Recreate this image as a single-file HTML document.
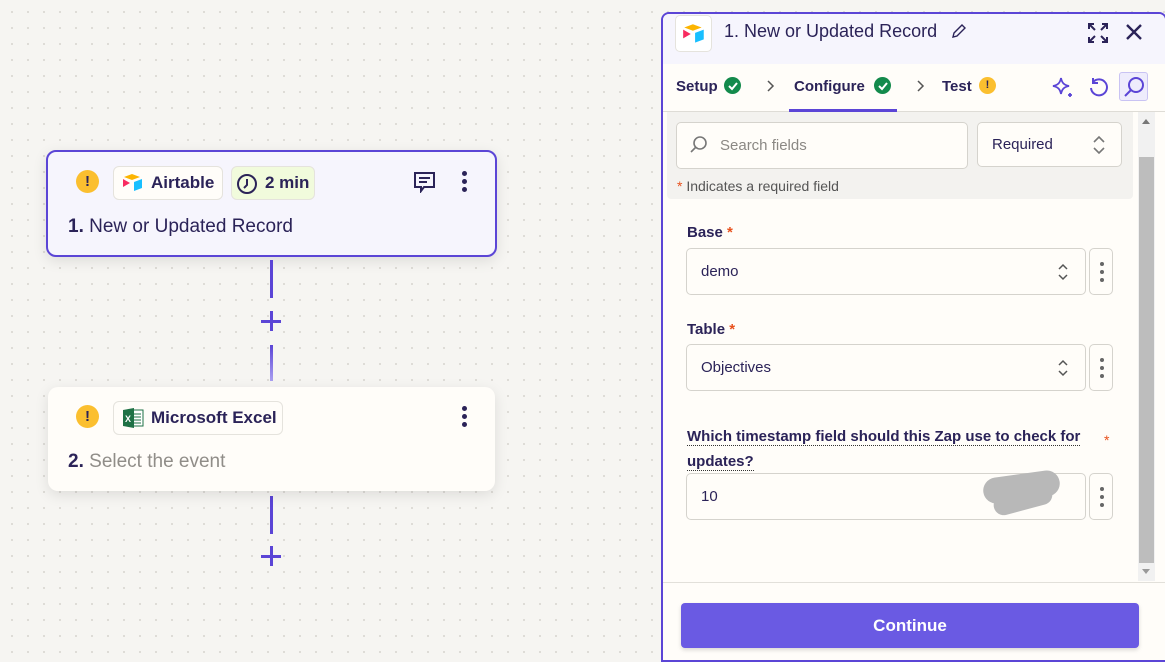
<!DOCTYPE html>
<html><head><style>
*{box-sizing:border-box;margin:0;padding:0}
body{width:1165px;height:657px;overflow:hidden;position:relative;font-family:"Liberation Sans",sans-serif;color:#2b2358;
background-color:#f6f5f2;background-image:radial-gradient(#dcdad5 1px,transparent 1.2px);background-size:16px 16px;background-position:4px 4px}
.abs{position:absolute}
.card{position:absolute;border-radius:10px;background:#fffdf9;box-shadow:0 4px 14px rgba(0,0,0,.10)}
.warn{position:absolute;width:23px;height:23px;border-radius:50%;background:#fbbf2f;color:#2b2358;font-weight:bold;font-size:15px;text-align:center;line-height:23px}
.chip{position:absolute;height:34px;border:1px solid #e5e3dd;border-radius:6px;background:#fffdf9;font-size:17px;font-weight:bold;line-height:32px;color:#2b2358}
.dots{position:absolute;width:6px}
.dots i{display:block;width:5px;height:5px;border-radius:50%;background:#2b2358;margin-bottom:3px}
.lbl{position:absolute;font-size:15px;font-weight:bold;color:#2b2358}
.inp{position:absolute;height:47px;border:1px solid #d5d3cd;border-radius:5px;background:#fffdf9;font-size:15px;line-height:45px;padding-left:14px;color:#2b2358}
.kb{position:absolute;width:24px;height:47px;border:1px solid #d5d3cd;border-radius:5px;background:#fffdf9}
.kb i{position:absolute;left:10px;width:4px;height:4px;border-radius:50%;background:#666}
.star{color:#e8501c}
.chev{position:absolute;top:0}
</style></head><body>

<!-- card 1 -->
<div class="card" style="left:46px;top:150px;width:451px;height:107px;border:2px solid #5b45d6;background:#f6f5fd"></div>
<div class="warn" style="left:76px;top:170px">!</div>
<div class="chip" style="left:113px;top:166px;width:110px;padding-left:37px">Airtable</div>
<svg class="abs" style="left:121px;top:173px" width="24" height="20" viewBox="0 0 24 20"><path d="M11 1L3 4l8 3 8-3z" fill="#fcb400"/><path d="M13 9v9l8-3V6z" fill="#18bfff"/><path d="M2 6v8l7-4z" fill="#f82b60"/></svg>
<div class="chip" style="left:231px;top:166px;width:84px;background:#f1fbdc;padding-left:33px">2 min</div>
<svg class="abs" style="left:236px;top:173px" width="22" height="22" viewBox="0 0 22 22"><circle cx="11" cy="11" r="9" fill="none" stroke="#2b2358" stroke-width="2"/><path d="M11 6v6l-3 3" fill="none" stroke="#2b2358" stroke-width="2"/></svg>
<svg class="abs" style="left:413px;top:171px" width="23" height="22" viewBox="0 0 23 22"><path d="M2 2h19v14H11l-3 4v-4H2z" fill="none" stroke="#2b2358" stroke-width="2"/><path d="M6 7h11M6 11h8" stroke="#2b2358" stroke-width="2"/></svg>
<div class="dots" style="left:462px;top:171px"><i></i><i></i><i></i></div>
<div class="abs" style="left:68px;top:216px;font-size:19px;color:#2b2358"><b>1.</b> New or Updated Record</div>

<!-- connectors -->
<div class="abs" style="left:270px;top:260px;width:3px;height:38px;background:#5b45d6"></div>
<div class="abs" style="left:261px;top:320px;width:20px;height:3px;background:#5b45d6"></div>
<div class="abs" style="left:270px;top:311px;width:3px;height:20px;background:#5b45d6"></div>
<div class="abs" style="left:270px;top:345px;width:3px;height:36px;background:linear-gradient(#5b45d6,#a99ff0)"></div>
<div class="abs" style="left:270px;top:496px;width:3px;height:38px;background:#5b45d6"></div>
<div class="abs" style="left:261px;top:555px;width:20px;height:3px;background:#5b45d6"></div>
<div class="abs" style="left:270px;top:546px;width:3px;height:20px;background:#5b45d6"></div>

<!-- card 2 -->
<div class="card" style="left:48px;top:387px;width:447px;height:104px"></div>
<div class="warn" style="left:76px;top:405px">!</div>
<div class="chip" style="left:113px;top:401px;width:170px;padding-left:37px">Microsoft Excel</div>
<svg class="abs" style="left:122px;top:407px" width="22" height="22" viewBox="0 0 22 22"><rect x="8" y="3" width="13" height="16" fill="#fff" stroke="#1e7145"/><path d="M11 7h8M11 10h8M11 13h8M11 16h8" stroke="#1e7145"/><path d="M1 3l11-2v20L1 19z" fill="#1e7145"/><text x="3" y="15" font-size="9" fill="#fff" font-family="Liberation Sans" font-weight="bold">X</text></svg>
<div class="dots" style="left:462px;top:406px"><i></i><i></i><i></i></div>
<div class="abs" style="left:68px;top:451px;font-size:19px;color:#2b2358"><b>2.</b> <span style="color:#908d88">Select the event</span></div>

<!-- panel -->
<div class="abs" style="left:661px;top:12px;width:506px;height:650px;border:2px solid #5b45d6;border-radius:8px 8px 0 0;background:#fffdf9;overflow:hidden">
<div class="abs" style="left:-2px;top:-2px;width:506px;height:650px">
  <div class="abs" style="left:0;top:0;width:506px;height:54px;background:#f6f5fd"></div>
  <div class="abs" style="left:14px;top:3px;width:37px;height:37px;border:1px solid #e5e3dd;border-radius:5px;background:#fff"></div>
  <svg class="abs" style="left:20px;top:10px" width="26" height="24" viewBox="0 0 24 20"><path d="M11 1L3 4l8 3 8-3z" fill="#fcb400"/><path d="M13 9v9l8-3V6z" fill="#18bfff"/><path d="M2 6v8l7-4z" fill="#f82b60"/></svg>
  <div class="abs" style="left:63px;top:9px;font-size:18px;color:#2b2358">1. New or Updated Record</div>
  <svg class="abs" style="left:290px;top:11px" width="16" height="16" viewBox="0 0 16 16"><path d="M2 14l1-4 8-8 3 3-8 8z" fill="none" stroke="#2b2358" stroke-width="1.4"/></svg>
  <svg class="abs" style="left:426px;top:10px" width="22" height="22" viewBox="0 0 22 22" fill="none" stroke="#2b2358" stroke-width="2"><path d="M2 7V2h5M2 2l6 6M20 7V2h-5M20 2l-6 6M2 15v5h5M2 20l6-6M20 15v5h-5M20 20l-6-6"/></svg>
  <svg class="abs" style="left:464px;top:11px" width="18" height="18" viewBox="0 0 18 18" stroke="#2b2358" stroke-width="2.4"><path d="M2 2l14 14M16 2L2 16"/></svg>
  <!-- tabs -->
  <div class="abs" style="left:0;top:52px;width:506px;height:48px;background:#fffdf9;border-bottom:1px solid #dedcd6"></div>
  <div class="abs" style="left:15px;top:66px;font-size:15px;font-weight:bold">Setup</div>
  <div class="abs" style="left:63px;top:65px;width:17px;height:17px;border-radius:50%;background:#138a4c"></div>
  <svg class="abs" style="left:63px;top:65px" width="17" height="17"><path d="M5 9l3 3 5-6" fill="none" stroke="#fff" stroke-width="2"/></svg>
  <svg class="abs" style="left:104px;top:67px" width="10" height="14" viewBox="0 0 10 14" fill="none" stroke="#555" stroke-width="1.5"><path d="M3 2l5 5-5 5"/></svg>
  <div class="abs" style="left:133px;top:66px;font-size:15px;font-weight:bold">Configure</div>
  <div class="abs" style="left:213px;top:65px;width:17px;height:17px;border-radius:50%;background:#138a4c"></div>
  <svg class="abs" style="left:213px;top:65px" width="17" height="17"><path d="M5 9l3 3 5-6" fill="none" stroke="#fff" stroke-width="2"/></svg>
  <div class="abs" style="left:128px;top:97px;width:108px;height:3px;background:#5b45d6"></div>
  <svg class="abs" style="left:254px;top:67px" width="10" height="14" viewBox="0 0 10 14" fill="none" stroke="#555" stroke-width="1.5"><path d="M3 2l5 5-5 5"/></svg>
  <div class="abs" style="left:281px;top:66px;font-size:15px;font-weight:bold">Test</div>
  <div class="warn" style="left:318px;top:65px;width:17px;height:17px;line-height:17px;font-size:11px">!</div>
  <svg class="abs" style="left:391px;top:64px" width="22" height="22" viewBox="0 0 22 22" fill="none" stroke="#5b45d6" stroke-width="1.8"><path d="M9 2c1 5 3 7 8 8-5 1-7 3-8 8-1-5-3-7-8-8 5-1 7-3 8-8z"/><path d="M18 17v4M16 19h4"/></svg>
  <svg class="abs" style="left:427px;top:64px" width="22" height="22" viewBox="0 0 22 22" fill="none" stroke="#5b45d6" stroke-width="2"><path d="M5 6a8 8 0 1 1-2 6"/><path d="M5 2v5h5"/></svg>
  <div class="abs" style="left:458px;top:60px;width:29px;height:29px;border:1px solid #c9c3f3;border-radius:3px;background:#eeecfc"></div>
  <svg class="abs" style="left:462px;top:64px" width="22" height="22" viewBox="0 0 22 22" fill="none" stroke="#5b45d6" stroke-width="2"><circle cx="13" cy="9" r="7"/><path d="M8 14l-6 6"/></svg>
  <!-- filter area -->
  <div class="abs" style="left:6px;top:100px;width:466px;height:87px;background:#f3f2ef;border-radius:0 0 4px 4px"></div>
  <div class="inp" style="left:15px;top:110px;width:292px;height:47px;color:#8b8884;padding-left:43px">Search fields</div>
  <svg class="abs" style="left:28px;top:123px" width="20" height="20" viewBox="0 0 20 20" fill="none" stroke="#777" stroke-width="1.6"><circle cx="11" cy="8" r="6"/><path d="M7 12l-5 5"/></svg>
  <div class="inp" style="left:316px;top:110px;width:145px;height:45px;line-height:43px">Required</div>
  <svg class="abs" style="left:430px;top:122px" width="16" height="22" viewBox="0 0 16 22" fill="none" stroke="#777" stroke-width="1.6"><path d="M3 8l5-5 5 5M3 14l5 5 5-5"/></svg>
  <div class="abs" style="left:16px;top:166px;font-size:14px;color:#555"><span class="star">*</span> Indicates a required field</div>
  <!-- fields -->
  <div class="lbl" style="left:26px;top:212px">Base <span class="star">*</span></div>
  <div class="inp" style="left:25px;top:236px;width:400px">demo</div>
  <svg class="abs" style="left:395px;top:251px" width="14" height="18" viewBox="0 0 14 18" fill="none" stroke="#555" stroke-width="1.5"><path d="M3 6l4-4 4 4M3 12l4 4 4-4"/></svg>
  <div class="kb" style="left:428px;top:236px"><i style="top:13px"></i><i style="top:21px"></i><i style="top:29px"></i></div>
  <div class="lbl" style="left:26px;top:309px">Table <span class="star">*</span></div>
  <div class="inp" style="left:25px;top:332px;width:400px">Objectives</div>
  <svg class="abs" style="left:395px;top:347px" width="14" height="18" viewBox="0 0 14 18" fill="none" stroke="#555" stroke-width="1.5"><path d="M3 6l4-4 4 4M3 12l4 4 4-4"/></svg>
  <div class="kb" style="left:428px;top:332px"><i style="top:13px"></i><i style="top:21px"></i><i style="top:29px"></i></div>
  <div class="lbl" style="left:26px;top:412px;line-height:25px;width:400px"><span style="border-bottom:1px dotted #333">Which timestamp field should this Zap use to check for</span><br><span style="border-bottom:1px dotted #333">updates?</span></div>
  <div class="abs star" style="left:443px;top:420px;font-size:14px">*</div>
  <div class="inp" style="left:25px;top:461px;width:400px">10</div>
  <div class="abs" style="left:322px;top:462px;width:77px;height:26px;background:#b8b8b8;border-radius:14px;transform:rotate(-8deg)"></div>
  <div class="abs" style="left:332px;top:478px;width:60px;height:20px;background:#b8b8b8;border-radius:12px;transform:rotate(-15deg)"></div>
  <div class="kb" style="left:428px;top:461px"><i style="top:13px"></i><i style="top:21px"></i><i style="top:29px"></i></div>
  <!-- scrollbar -->
  <div class="abs" style="left:477px;top:100px;width:17px;height:469px;background:#f1f1f1"></div>
  <div class="abs" style="left:478px;top:145px;width:15px;height:406px;background:#bdbdbd"></div>
  <div class="abs" style="left:481px;top:107px;width:0;height:0;border:4px solid transparent;border-bottom:5px solid #777;border-top:0"></div>
  <div class="abs" style="left:481px;top:557px;width:0;height:0;border:4px solid transparent;border-top:5px solid #999;border-bottom:0"></div>
  <div class="abs" style="left:0;top:570px;width:506px;height:1px;background:#e2e0da"></div>
  <!-- button -->
  <div class="abs" style="left:20px;top:591px;width:458px;height:45px;border-radius:4px;background:#6a5ae3;color:#fff;font-size:17px;font-weight:bold;text-align:center;line-height:45px;box-shadow:0 2px 4px rgba(0,0,0,.15)">Continue</div>
</div>
</div>
</body></html>
